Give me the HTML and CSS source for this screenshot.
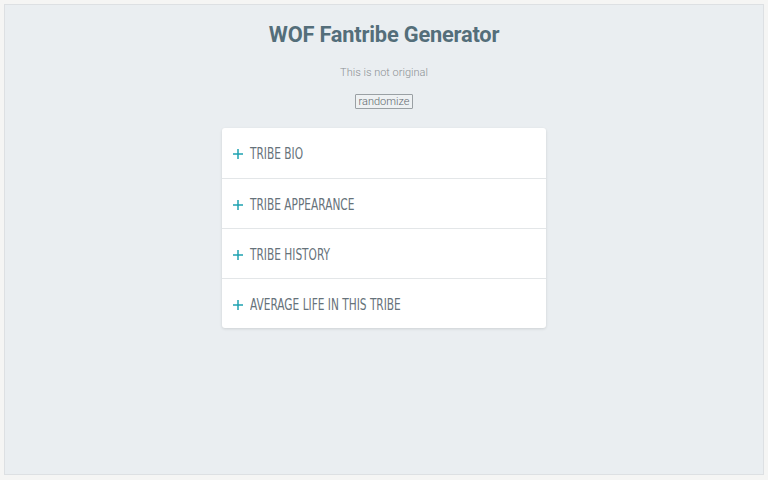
FILE: index.html
```html
<!DOCTYPE html>
<html lang="en">
<head>
  <meta charset="UTF-8">
  <meta name="viewport" content="width=device-width, initial-scale=1">
  <title>WOF Fantribe Generator</title>
  <link rel="stylesheet" href="styles.css">
</head>
<body>
  <div class="page">
    <h1>WOF Fantribe Generator</h1>
    <p class="subtitle">This is not original</p>
    <button class="randomize" onclick="randomize()">randomize</button>
    <div class="accordion">
      <div class="section">
        <svg class="plus" viewBox="0 0 10 10"><path d="M5 0v10M0 5h10"/></svg>
        <span class="label">TRIBE BIO</span>
      </div>
      <div class="section">
        <svg class="plus" viewBox="0 0 10 10"><path d="M5 0v10M0 5h10"/></svg>
        <span class="label">TRIBE APPEARANCE</span>
      </div>
      <div class="section">
        <svg class="plus" viewBox="0 0 10 10"><path d="M5 0v10M0 5h10"/></svg>
        <span class="label">TRIBE HISTORY</span>
      </div>
      <div class="section">
        <svg class="plus" viewBox="0 0 10 10"><path d="M5 0v10M0 5h10"/></svg>
        <span class="label">AVERAGE LIFE IN THIS TRIBE</span>
      </div>
    </div>
  </div>
  <script>
    function randomize() {
      // nothing generated yet
    }
  </script>
</body>
</html>
```
FILE: styles.css
```css
html, body {
  margin: 0;
  height: 100%;
}
body {
  background-color: #f5f5f4;
  padding: 4px 4px 5px 4px;
  box-sizing: border-box;
  font-family: Roboto, "Liberation Sans", sans-serif;
}
.page {
  height: 100%;
  box-sizing: border-box;
  background-color: #eaeef1;
  border: 1px solid #dde0e3;
  text-align: center;
  padding-top: 17px;
}
h1 {
  margin: 0;
  font-size: 21.8px;
  font-weight: 700;
  color: #546e7a;
  line-height: 26px;
  letter-spacing: -0.2px;
}
.subtitle {
  margin: 18px 0 0;
  font-size: 11px;
  font-weight: 300;
  color: #8b9094;
  line-height: 14px;
}
.randomize {
  margin-top: 14px;
  padding: 0 3px;
  height: 15px;
  font-family: Roboto, "Liberation Sans", sans-serif;
  font-size: 11px;
  font-weight: 300;
  line-height: 13px;
  color: #5f686e;
  background: #eef1f3;
  border: 1px solid #9aa0a4;
  border-radius: 1px;
}
.accordion {
  width: 324px;
  margin: 19px auto 0;
  background: #fff;
  border-radius: 3px;
  box-shadow: 0 1px 3px rgba(0,0,0,0.12);
  text-align: left;
}
.section {
  height: 50px;
  display: flex;
  align-items: center;
  padding: 2px 0 0 11px;
  box-sizing: border-box;
  border-top: 1px solid #e3e6e8;
}
.section:first-child {
  border-top: none;
}
.plus {
  width: 10px;
  height: 10px;
  margin-right: 7px;
  stroke: #1fa2b1;
  stroke-width: 1.5;
  fill: none;
}
.label {
  display: inline-block;
  font-family: "DejaVu Sans Condensed", sans-serif;
  font-size: 15.5px;
  color: #66727a;
  white-space: nowrap;
  transform: scaleX(0.76);
  transform-origin: left center;
}
```
